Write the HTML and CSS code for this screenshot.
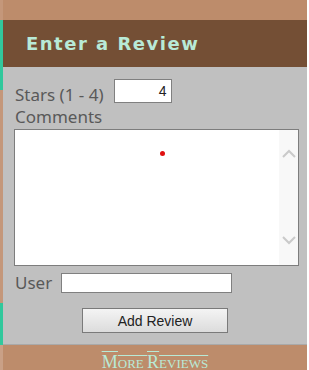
FILE: index.html
```html
<!DOCTYPE html>
<html lang="en">
<head>
    <meta charset="UTF-8">
    <title>Enter a Review</title>
    <link rel="stylesheet" href="styles.css">
</head>
<body>
    <div class="frame">
        <div class="top-band"></div>

        <!-- Review form -->
        <div class="review-box">
            <h2 class="review-title">Enter a Review</h2>
            <form class="review-form">
                <div class="stars-row">
                    <label for="stars">Stars (1 - 4)</label>
                    <input type="text" id="stars" class="stars-input" value="4">
                </div>
                <label for="comments" class="comments-label">Comments</label>
                <div class="comments-box">
                    <textarea id="comments"></textarea>
                    <div class="scroll-track">
                        <svg width="14" height="9" viewBox="0 0 14 9"><path d="M1 8 L7 2 L13 8" fill="none" stroke="#cacaca" stroke-width="2"/></svg>
                        <svg width="14" height="9" viewBox="0 0 14 9"><path d="M1 1 L7 7 L13 1" fill="none" stroke="#cacaca" stroke-width="2"/></svg>
                    </div>
                    <span class="cursor-dot"></span>
                </div>
                <div class="user-row">
                    <label for="user">User</label>
                    <input type="text" id="user" class="user-input">
                </div>
                <div class="btn-row">
                    <button type="button" class="add-btn">Add Review</button>
                </div>
            </form>
        </div>

        <div class="more-bar">
            <a href="#" class="more-link"><span class="cap">M</span>ore <span class="cap">R</span>eviews</a>
        </div>
    </div>
</body>
</html>
```

FILE: styles.css
```css
/* General */
body {
    margin: 0;
    padding: 0;
    background: #ffffff;
    font-family: "Noto Sans", sans-serif;
}

.frame {
    width: 307px;
    height: 370px;
    overflow: hidden;
    padding-left: 3px;
    box-sizing: border-box;
    background: linear-gradient(to bottom,
        #c4977a 0, #c4977a 20px,
        #31c89c 20px, #31c89c 90px,
        #c4977a 90px, #c4977a 303px,
        #31c89c 303px, #31c89c 345px,
        #c9a086 345px) left top / 3px 100% no-repeat;
}

.top-band {
    height: 20px;
    background: #bd8c6b;
}

/* Review box */
.review-box {
    background: #c0c0c0;
    border-bottom: 1px solid #a9a9a9;
}

.review-title {
    margin: 0;
    height: 47px;
    box-sizing: border-box;
    padding: 12px 0 0 23px;
    background: #744f35;
    color: #b8ead7;
    font-family: "DejaVu Sans", sans-serif;
    font-size: 18px;
    font-weight: bold;
    letter-spacing: 1.5px;
    line-height: 24px;
}

.review-form {
    padding: 12px 8px 11px 12px;
    color: #595959;
    font-size: 17px;
}

.stars-row {
    display: flex;
    align-items: flex-end;
    gap: 10px;
}

.stars-row label {
    line-height: 20px;
    margin-bottom: -2px;
}

.stars-input {
    width: 58px;
    height: 24px;
    box-sizing: border-box;
    border: 1px solid #808080;
    padding: 0 4px 0 0;
    text-align: right;
    font-family: "Liberation Sans", sans-serif;
    font-size: 14px;
    color: #222;
    background: #fff;
}

.comments-label {
    display: block;
    line-height: 20px;
    margin-top: 4px;
}

/* Comments textarea with its scrollbar */
.comments-box {
    position: relative;
    display: flex;
    height: 137px;
    margin: 2px 0 0 -1px;
    border: 1px solid #7d7d7d;
    background: #fff;
    box-sizing: border-box;
}

.comments-box textarea {
    flex: 1;
    border: none;
    outline: none;
    resize: none;
    background: #fff;
}

.scroll-track {
    width: 19px;
    background: #f8f8f8;
    display: flex;
    flex-direction: column;
    justify-content: space-between;
    align-items: center;
    padding: 19px 0 20px;
}

.cursor-dot {
    position: absolute;
    left: 145px;
    top: 21px;
    width: 5px;
    height: 5px;
    border-radius: 50%;
    background: #e01010;
}

.user-row {
    display: flex;
    align-items: center;
    gap: 9px;
    margin-top: 7px;
}

.user-row label {
    line-height: 20px;
}

.user-input {
    width: 171px;
    height: 20px;
    box-sizing: border-box;
    border: 1px solid #808080;
    background: #fff;
}

.btn-row {
    display: flex;
    justify-content: center;
    margin-top: 15px;
}

.add-btn {
    width: 146px;
    height: 25px;
    border: 1px solid #7a7a7a;
    background: linear-gradient(to bottom, #f4f4f4, #dcdcdc);
    font-family: "Liberation Sans", sans-serif;
    font-size: 14px;
    color: #222;
    margin-left: -4px;
}

/* More reviews */
.more-bar {
    height: 30px;
    background: #bd8c6b;
    text-align: center;
    padding-top: 5px;
    box-sizing: border-box;
}

.more-link {
    font-family: "Liberation Serif", serif;
    font-size: 13px;
    text-transform: uppercase;
    color: #b8ead7;
    text-decoration: overline;
    line-height: 24px;
}

.more-link .cap {
    font-size: 18px;
    text-decoration: overline;
}
```
